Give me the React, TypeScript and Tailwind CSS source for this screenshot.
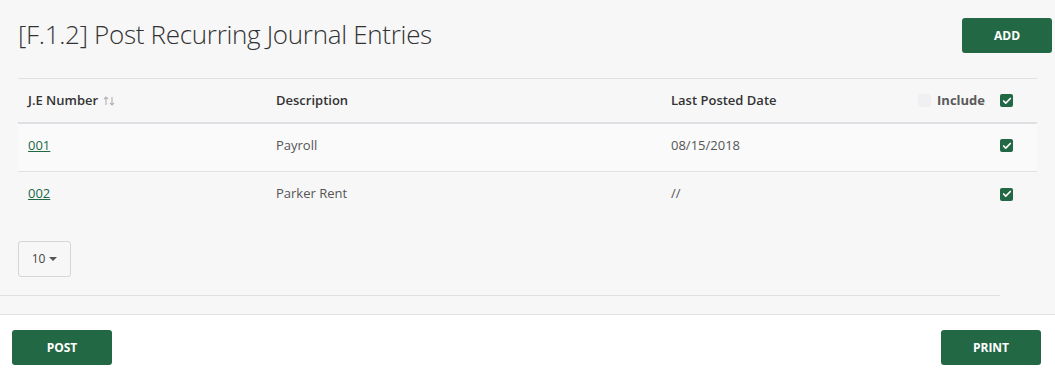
import { Check } from "lucide-react";

const rows = [
  { id: "001", desc: "Payroll", date: "08/15/2018" },
  { id: "002", desc: "Parker Rent", date: "//" },
];

function Box() {
  return (
    <span className="flex h-[13px] w-[13px] items-center justify-center rounded-[2px] bg-[#236845]">
      <Check className="h-[10px] w-[10px] text-white" strokeWidth={4} />
    </span>
  );
}

export default function App() {
  return (
    <div className="flex h-[375px] w-[1055px] flex-col bg-white font-['Open_Sans',sans-serif] text-[13px] text-[#555]">
      <div className="flex h-[315px] flex-col border-b border-[#e2e2e6] bg-[#f7f7f8]">
        <div className="flex h-[78px] items-start justify-between pl-[18px] pr-[3px]">
          <h1 className="mt-[15px] text-[26px] font-light tracking-[-0.3px] text-[#333]">
            [F.1.2] Post Recurring Journal Entries
          </h1>
          <button className="mt-[18px] h-[35px] w-[90px] rounded-[3px] bg-[#236845] text-[12px] font-bold text-white">
            ADD
          </button>
        </div>

        <div className="ml-[18px] w-[1019px]">
          <div className="flex h-[46px] items-center border-t border-b-2 border-[#dfdfe4] text-[13px] font-semibold text-[#333]">
            <div className="flex w-[258px] items-center pl-[10px]">
              J.E Number
              {/* sort arrows */}
              <svg className="ml-[5px] h-[10px] w-[12px] text-[#b5b5b5]" viewBox="0 0 12 10" fill="none" stroke="currentColor" strokeWidth={1.2}>
                <path d="M3 9V1M1 3l2-2 2 2" />
                <path d="M9 1v8M7 7l2 2 2-2" />
              </svg>
            </div>
            <div className="w-[395px]">Description</div>
            <div className="flex-1">Last Posted Date</div>
            <div className="flex items-center pr-[24px]">
              <span className="mr-[6px] h-[13px] w-[13px] rounded-[2px] bg-[#f0f0f2]" />
              <span className="font-bold text-[#5a5a5a]">Include</span>
              <span className="ml-[15px]">
                <Box />
              </span>
            </div>
          </div>
          {rows.map((r, i) => (
            <div
              key={r.id}
              className={`flex h-[48px] items-center pb-[4px] ${i === 0 ? "border-b border-[#e2e2e6] bg-[#fafafb]" : ""}`}
            >
              <div className="w-[258px] pl-[10px]">
                <a href="#" className="text-[#236845] underline">
                  {r.id}
                </a>
              </div>
              <div className="w-[395px]">{r.desc}</div>
              <div className="flex-1">{r.date}</div>
              <div className="pr-[24px]">
                <Box />
              </div>
            </div>
          ))}
          <div className="mt-[21px] flex h-[36px] w-[53px] items-center justify-center rounded-[3px] border border-[#d6d6d6] text-[12px] text-[#444]">
            10
            <span className="ml-[4px] h-0 w-0 border-x-[4px] border-t-[4px] border-x-transparent border-t-[#555]" />
          </div>
        </div>
        <div className="mt-[18px] w-[1000px] border-b border-[#e0e0e4]" />
      </div>

      <div className="flex items-start justify-between pl-[12px] pr-[14px] pt-[15px]">
        <button className="h-[35px] w-[100px] rounded-[3px] bg-[#236845] text-[12px] font-bold text-white">
          POST
        </button>
        <button className="h-[35px] w-[100px] rounded-[3px] bg-[#236845] text-[12px] font-bold text-white">
          PRINT
        </button>
      </div>
    </div>
  );
}
